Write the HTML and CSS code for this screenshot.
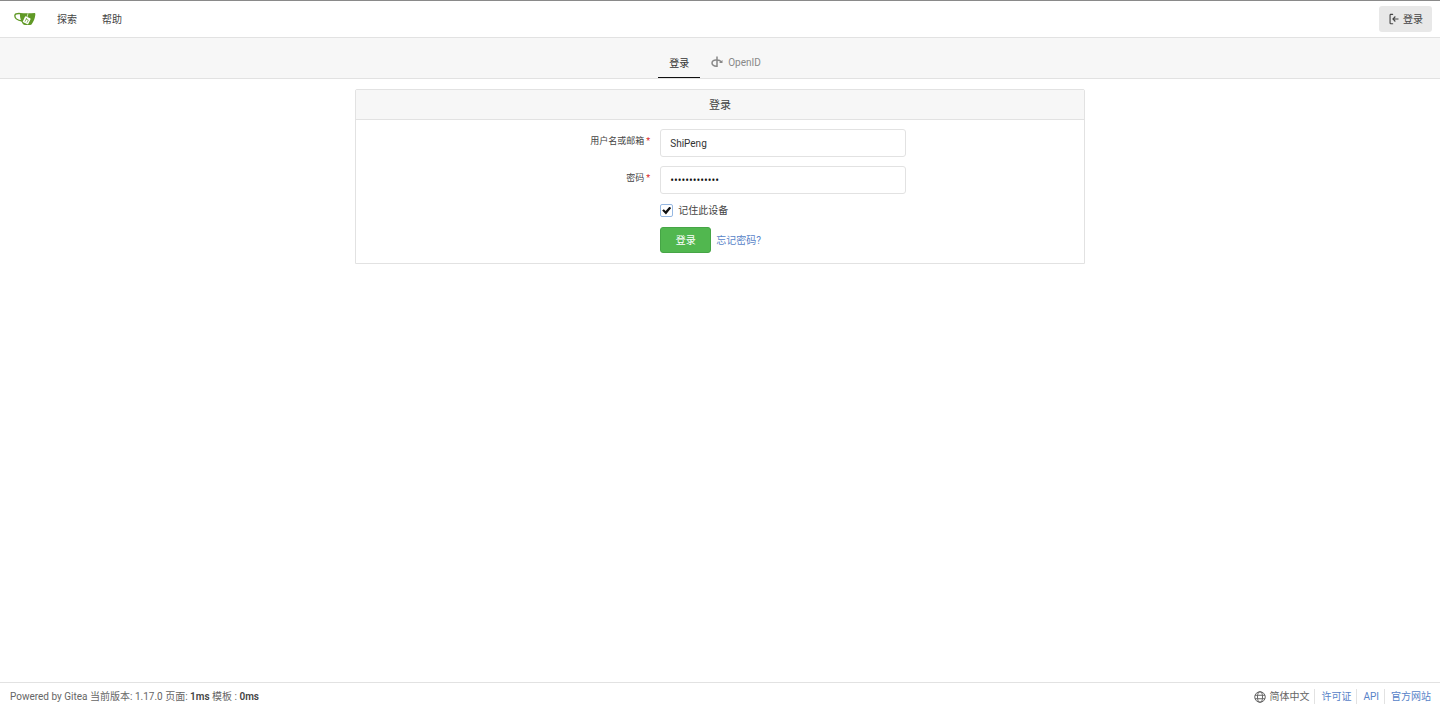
FILE: index.html
```html
<!DOCTYPE html>
<html lang="zh-CN">
<head>
    <meta charset="UTF-8">
    <meta name="viewport" content="width=device-width, initial-scale=1.0">
    <title>登录 - Gitea</title>
    <link rel="stylesheet" href="styles.css">
</head>
<body>

    <nav class="navbar">
        <a class="brand" href="#" aria-label="Gitea">
            <svg width="22" height="14" viewBox="0 0 66 42">
                <path fill="none" stroke="#609926" stroke-width="4" d="M22 5C12 4 5 3 3 9c-2 8 5 17 22 18"/>
                <path fill="#609926" d="M18 3c14 1 32 1 44 0 2 0 2 3 2 5-1 10-5 20-10 27-2 3-4 4-8 4H33c-5 0-8-5-10-10-4-7-6-17-5-26z"/>
                <path fill="#fff" d="M35 13l13 6c2 1 2 2 1 4l-6 12c-1 2-2 2-4 1l-11-5c-2-1-2-2-1-4l6-13z"/>
                <path fill="none" stroke="#609926" stroke-width="2" d="M38 18l-5 11M36 21l7 3-4 8"/>
                <path fill="none" stroke="#fff" stroke-width="2" d="M42 4l-3 12"/>
            </svg>
        </a>
        <a class="item" href="#">探索</a>
        <a class="item" href="#">帮助</a>
        <a class="signin" href="#">
            <svg width="12" height="12" viewBox="0 0 16 16" fill="currentColor">
                <path d="M2 2.75C2 1.784 2.784 1 3.75 1h2.5a.75.75 0 0 1 0 1.5h-2.5a.25.25 0 0 0-.25.25v10.5c0 .138.112.25.25.25h2.5a.75.75 0 0 1 0 1.5h-2.5A1.75 1.75 0 0 1 2 13.25z"/>
                <path d="M8.300 8.800l2 2-1 1.200L5.500 8l3.800-4 1 1.200-2 2H14v1.600z"/>
            </svg>
            登录
        </a>
    </nav>

    <div class="tabs">
        <a class="tab active" href="#">登录</a>
        <a class="tab" href="#">
            <svg width="12" height="12" viewBox="0 0 24 24" fill="none" stroke="currentColor" stroke-width="3">
                <path d="M12 1v21M12 8C6 7 2 10 2 14s4 7 10 6.500M13 8c4 0 6 2 8 4"/>
                <path fill="currentColor" stroke="none" d="M23 8v6h-7z"/>
            </svg>
            OpenID
        </a>
    </div>

    <main class="content">
        <form class="login">
            <h4 class="login-header">登录</h4>
            <div class="login-body">
                <div class="field">
                    <label class="required" for="user_name">用户名或邮箱</label>
                    <input class="text" id="user_name" type="text" value="ShiPeng">
                </div>
                <div class="field">
                    <label class="required" for="password">密码</label>
                    <input class="text password" id="password" type="password" value="1234567890123">
                </div>
                <div class="field-inline">
                    <input class="check" id="remember" type="checkbox" checked>
                    <label for="remember">记住此设备</label>
                </div>
                <div class="field-inline">
                    <button class="submit" type="button">登录</button>
                    <a class="link" href="#">忘记密码?</a>
                </div>
            </div>
        </form>
    </main>

    <footer class="footer">
        <div>Powered by Gitea 当前版本: 1.17.0 页面: <strong>1ms</strong> 模板 : <strong>0ms</strong></div>
        <div class="footer-links">
            <span class="language">
                <svg width="12" height="12" viewBox="0 0 24 24" fill="none" stroke="currentColor" stroke-width="2">
                    <circle cx="12" cy="12" r="10.500"/>
                    <ellipse cx="12" cy="12" rx="5" ry="10.500"/>
                    <path d="M2 8.500h20M2 15.500h20"/>
                </svg>
                简体中文
            </span>
            <a class="link" href="#">许可证</a>
            <a class="link" href="#">API</a>
            <a class="link" href="#">官方网站</a>
        </div>
    </footer>

</body>
</html>
```
FILE: styles.css
```css
* {
    box-sizing: border-box;
}

body {
    display: flex;
    flex-direction: column;
    min-height: 100vh;
    margin: 0;
    font-family: Roboto, "Noto Sans CJK SC", sans-serif;
    font-size: 10px;
    line-height: 15px;
    color: #444;
    background-color: #fff;
}

a {
    color: inherit;
    text-decoration: none;
}

svg {
    flex: none;
}

.navbar {
    display: flex;
    align-items: center;
    height: 38px;
    padding: 0 8px 0 14px;
    border-top: 1px solid #8a8a8a;
    border-bottom: 1px solid #e2e2e2;
}

.brand {
    display: flex;
    margin-right: 9px;
}

.item {
    padding: 6px 12px;
}

.item + .item {
    margin-left: 1px;
}

.signin {
    display: flex;
    align-items: center;
    gap: 3px;
    height: 26px;
    margin-left: auto;
    padding: 0 9px;
    border-radius: 3px;
    background-color: #e8e8e8;
}

.tabs {
    display: flex;
    justify-content: center;
    align-items: flex-end;
    height: 41px;
    padding-right: 10px;
    background-color: #f7f7f7;
    border-bottom: 1px solid #e2e2e2;
}

.tab {
    display: flex;
    align-items: center;
    gap: 5px;
    height: 31px;
    padding: 0 11px;
    border-bottom: 1px solid transparent;
    color: #888;
}

.tab.active {
    padding-top: 2px;
    color: #333;
    border-bottom-color: #111;
}

.content {
    flex: 1;
    padding: 10px 16px;
}

.login {
    max-width: 730px;
    margin: 0 auto;
    border: 1px solid #e2e2e2;
    border-radius: 2px 2px 0 0;
}

.login-header {
    margin: 0;
    padding: 8px 7px 6px;
    border-bottom: 1px solid #e2e2e2;
    background-color: #f7f7f7;
    font-size: 11px;
    font-weight: 400;
    line-height: 15px;
    text-align: center;
}

.login-body {
    display: flex;
    flex-direction: column;
    gap: 9px;
    padding: 9px 10px 10px;
}

.field {
    display: flex;
    gap: 10px;
}

.field label {
    width: 40%;
    margin-left: 1px;
    padding-top: 5px;
    font-size: 9px;
    text-align: right;
}

.required::after {
    content: "*";
    margin-left: 2px;
    color: #db2828;
}

.text {
    width: 246px;
    height: 28px;
    padding: 0 9px;
    border: 1px solid #e2e2e2;
    border-radius: 3px;
    background-color: #fff;
    color: #333;
    font: inherit;
}

.password {
    font-family: "Open Sans", sans-serif;
    color: #111;
}

.field-inline {
    display: flex;
    align-items: center;
    gap: 5px;
    padding-left: calc(40% + 11px);
}

.check {
    display: grid;
    place-items: center;
    appearance: none;
    width: 13px;
    height: 13px;
    margin: 0;
    border: 1px solid #96b8e2;
    border-radius: 2px;
}

.check:checked::before {
    content: "";
    width: 9px;
    height: 8px;
    background-color: #111;
    clip-path: polygon(0 50%, 18% 35%, 38% 56%, 80% 2%, 100% 18%, 42% 100%);
}

.submit {
    width: 51px;
    height: 26px;
    padding: 0;
    border: 1px solid #46a546;
    border-radius: 3px;
    background-color: #51b74f;
    color: #fff;
    font: inherit;
}

.link {
    color: #5883c8;
}

.footer {
    display: flex;
    justify-content: space-between;
    align-items: center;
    height: 28px;
    padding: 0 9px 0 10px;
    border-top: 1px solid #e2e2e2;
    color: #666;
}

.footer strong {
    color: #444;
    font-weight: 600;
}

.footer-links {
    display: flex;
}

.language {
    display: flex;
    align-items: center;
    gap: 3px;
}

.footer-links .link {
    margin-left: 5px;
    padding-left: 6px;
    border-left: 1px solid #e2e2e2;
}
```
